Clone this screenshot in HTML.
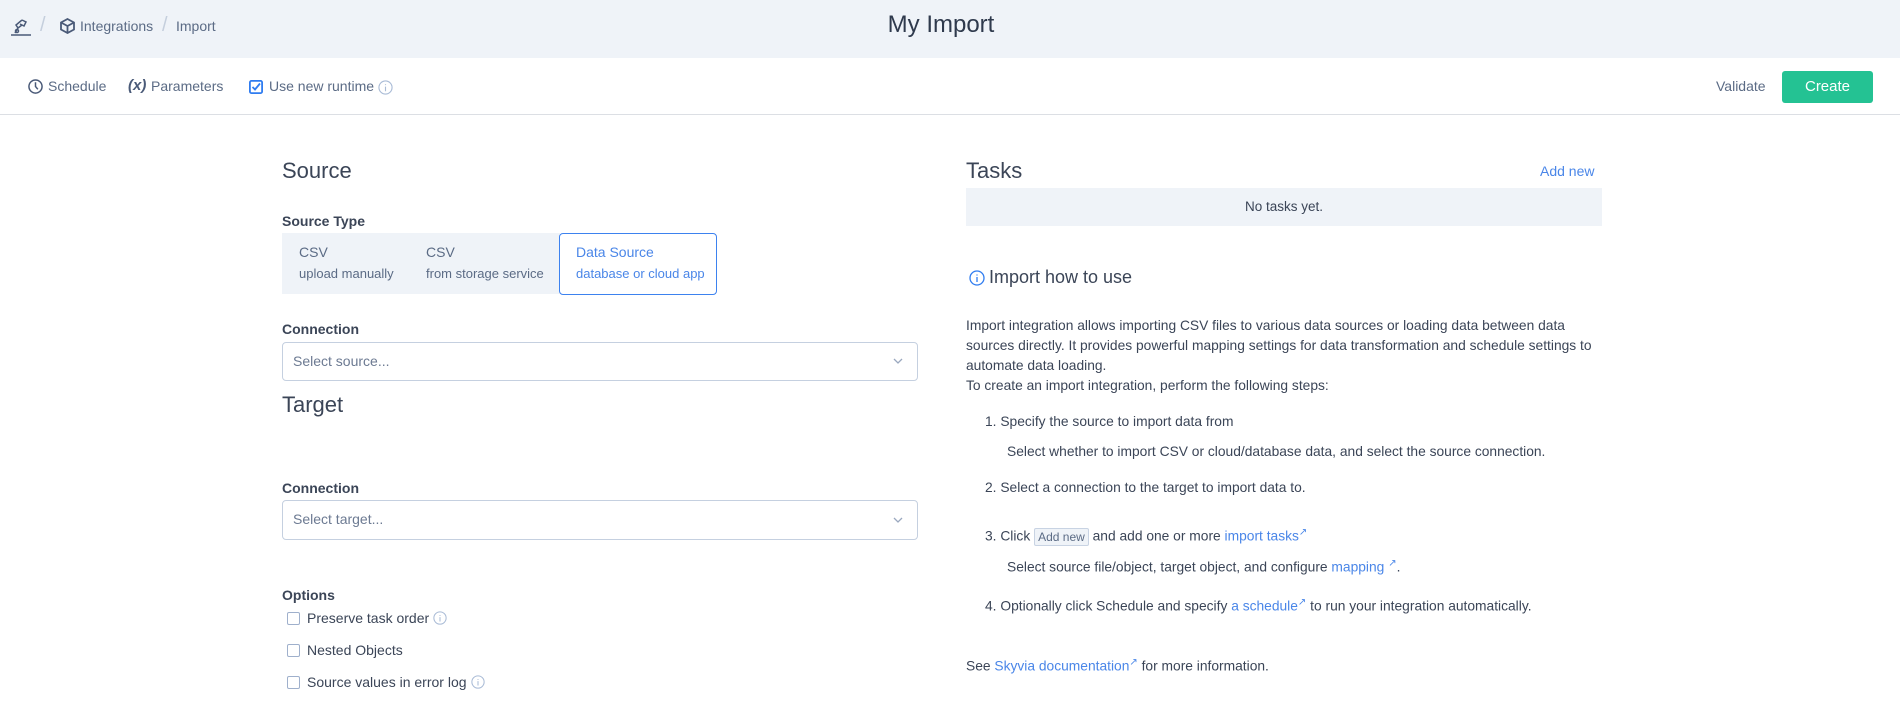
<!DOCTYPE html>
<html><head><meta charset="utf-8"><style>
*{box-sizing:border-box;margin:0;padding:0}
body{width:1900px;height:717px;overflow:hidden;background:#fff;font-family:"Liberation Sans",sans-serif;color:#3b4557;position:relative}
.a{position:absolute;white-space:nowrap}
.hdr{position:absolute;left:0;top:0;width:1900px;height:58px;background:#eff3f8}
.tb{position:absolute;left:0;top:58px;width:1900px;height:57px;border-bottom:1px solid #dcdfe4}
.lnk{color:#4a86e8}
.gray{color:#5b6b85}
.h2{font-size:22px;color:#3b4557}
.lbl{font-size:14px;font-weight:bold;color:#3b4557}
.sel{position:absolute;border:1px solid #c5d0e0;border-radius:4px;background:#fff}
.cb{position:absolute;width:13px;height:13px;border:1.5px solid #9fb0cc;border-radius:2px}
.p{font-size:13.8px;color:#3b4557}
.ic{display:inline-block;vertical-align:-2px;margin-left:4px}
</style></head><body>
<div class="hdr"></div>
<svg class="a" style="left:10px;top:16px" width="22" height="20" viewBox="0 0 22 20" fill="none" stroke="#4a5a78" stroke-width="1.5"><path d="M1 19h20M5 17l3-5 4-3M8 12l-2-3 6-5M12 4l4 2-2 4-4-2"/><circle cx="7" cy="15" r="1.5"/></svg>
<div class="a" style="left:40px;top:14px;font-size:20px;color:#c5cfdd">/</div>
<svg class="a" style="left:60px;top:18px" width="15" height="16" viewBox="0 0 15 16" fill="none" stroke="#4a5a78" stroke-width="1.8"><path d="M7.5 1L14 4.5v7L7.5 15 1 11.5v-7zM1 4.5l6.5 3.5L14 4.5M7.5 8v7"/></svg>
<div class="a gray" style="left:80px;top:18px;font-size:14px">Integrations</div>
<div class="a" style="left:162px;top:14px;font-size:20px;color:#c5cfdd">/</div>
<div class="a gray" style="left:176px;top:18px;font-size:14px">Import</div>
<div class="a" style="left:0;width:1882px;text-align:center;top:11px;font-size:24px;color:#2f3a4d">My Import</div>
<div class="tb"></div>
<svg class="a" style="left:28px;top:79px" width="15" height="15" viewBox="0 0 16 16" fill="none" stroke="#4a5a78" stroke-width="1.6"><circle cx="8" cy="8" r="7"/><path d="M8 3.5V8l2.5 3"/></svg>
<div class="a gray" style="left:48px;top:78px;font-size:14px">Schedule</div>
<div class="a" style="left:128px;top:77px;font-size:15px;font-style:italic;font-weight:bold;color:#4a5a78">(x)</div>
<div class="a gray" style="left:151px;top:78px;font-size:14px">Parameters</div>
<svg class="a" style="left:249px;top:80px" width="14" height="14" viewBox="0 0 14 14"><rect x="0.9" y="0.9" width="12.2" height="12.2" rx="1.5" fill="none" stroke="#2f7cf0" stroke-width="1.8"/><path d="M3.5 7l2.5 2.5 5-6" fill="none" stroke="#2f7cf0" stroke-width="1.8"/></svg>
<div class="a gray" style="left:269px;top:78px;font-size:14px">Use new runtime</div>
<svg class="a" style="left:378px;top:80px" width="15" height="15" viewBox="0 0 16 16" fill="none" stroke="#a9bbd6" stroke-width="1.2"><circle cx="8" cy="8" r="7"/><path d="M8 7v5M8 4.5v1"/></svg>
<div class="a gray" style="left:1716px;top:78px;font-size:14px">Validate</div>
<div class="a" style="left:1782px;top:71px;width:91px;height:32px;background:#24c293;border-radius:3px;color:#fff;font-size:15px;text-align:center;line-height:32px">Create</div>

<div class="a h2" style="left:282px;top:158px">Source</div>
<div class="a lbl" style="left:282px;top:213px">Source Type</div>
<div class="a" style="left:282px;top:233px;width:278px;height:61px;background:#eff3f8"></div>
<div class="a gray" style="left:299px;top:244px;font-size:14px">CSV</div>
<div class="a gray" style="left:299px;top:266px;font-size:13px">upload manually</div>
<div class="a gray" style="left:426px;top:244px;font-size:14px">CSV</div>
<div class="a gray" style="left:426px;top:266px;font-size:13px">from storage service</div>
<div class="a" style="left:559px;top:233px;width:158px;height:62px;border:1.5px solid #3d82ef;border-radius:4px"></div>
<div class="a lnk" style="left:576px;top:244px;font-size:14px">Data Source</div>
<div class="a lnk" style="left:576px;top:266px;font-size:13px">database or cloud app</div>
<div class="a lbl" style="left:282px;top:321px">Connection</div>
<div class="sel" style="left:282px;top:342px;width:636px;height:39px"></div>
<div class="a" style="left:293px;top:353px;font-size:14px;color:#6c7a92">Select source...</div>
<svg class="a" style="left:893px;top:357px" width="10" height="8" viewBox="0 0 10 8" fill="none" stroke="#9aa8bf" stroke-width="1.3"><path d="M1 2l4 4 4-4"/></svg>
<div class="a h2" style="left:282px;top:392px">Target</div>
<div class="a lbl" style="left:282px;top:480px">Connection</div>
<div class="sel" style="left:282px;top:500px;width:636px;height:40px"></div>
<div class="a" style="left:293px;top:511px;font-size:14px;color:#6c7a92">Select target...</div>
<svg class="a" style="left:893px;top:516px" width="10" height="8" viewBox="0 0 10 8" fill="none" stroke="#9aa8bf" stroke-width="1.3"><path d="M1 2l4 4 4-4"/></svg>
<div class="a lbl" style="left:282px;top:587px">Options</div>
<div class="cb" style="left:287px;top:612px"></div>
<div class="a" style="left:307px;top:610px;font-size:14px">Preserve task order<svg class="ic" width="14" height="14" viewBox="0 0 16 16" fill="none" stroke="#a9bbd6" stroke-width="1.2"><circle cx="8" cy="8" r="7"/><path d="M8 7v5M8 4.5v1"/></svg></div>
<div class="cb" style="left:287px;top:644px"></div>
<div class="a" style="left:307px;top:642px;font-size:14px">Nested Objects</div>
<div class="cb" style="left:287px;top:676px"></div>
<div class="a" style="left:307px;top:674px;font-size:14px">Source values in error log<svg class="ic" width="14" height="14" viewBox="0 0 16 16" fill="none" stroke="#a9bbd6" stroke-width="1.2"><circle cx="8" cy="8" r="7"/><path d="M8 7v5M8 4.5v1"/></svg></div>

<div class="a h2" style="left:966px;top:158px">Tasks</div>
<div class="a lnk" style="left:1540px;top:163px;font-size:14px">Add new</div>
<div class="a" style="left:966px;top:188px;width:636px;height:38px;background:#eff3f8;text-align:center;line-height:38px;font-size:13.5px">No tasks yet.</div>
<svg class="a" style="left:969px;top:270px" width="16" height="16" viewBox="0 0 16 16" fill="none" stroke="#2f7cf0" stroke-width="1.3"><circle cx="8" cy="8" r="7"/><path d="M8 7v5M8 4.5v1"/></svg>
<div class="a" style="left:989px;top:267px;font-size:18px">Import how to use</div>
<div class="a p" style="left:966px;top:316px;line-height:20px">Import integration allows importing CSV files to various data sources or loading data between data<br>sources directly. It provides powerful mapping settings for data transformation and schedule settings to<br>automate data loading.<br>To create an import integration, perform the following steps:</div>
<div class="a p" style="left:985px;top:414px">1. Specify the source to import data from</div>
<div class="a p gray" style="left:1007px;top:444px">Select whether to import CSV or cloud/database data, and select the source connection.</div>
<div class="a p" style="left:985px;top:480px">2. Select a connection to the target to import data to.</div>
<div class="a p" style="left:985px;top:527px">3. Click <span style="display:inline-block;border:1px solid #c8d3e3;background:#eff3f8;border-radius:2px;font-size:12px;padding:1px 3px;color:#5b6b85">Add new</span> and add one or more <span class="lnk">import tasks</span><sup class="lnk" style="font-size:10px">↗</sup></div>
<div class="a p gray" style="left:1007px;top:558px">Select source file/object, target object, and configure <span class="lnk">mapping</span> <sup class="lnk" style="font-size:10px">↗</sup>.</div>
<div class="a p" style="left:985px;top:597px">4. Optionally click Schedule and specify <span class="lnk">a schedule</span><sup class="lnk" style="font-size:10px">↗</sup> to run your integration automatically.</div>
<div class="a p" style="left:966px;top:657px">See <span class="lnk">Skyvia documentation</span><sup class="lnk" style="font-size:10px">↗</sup> for more information.</div>
</body></html>
